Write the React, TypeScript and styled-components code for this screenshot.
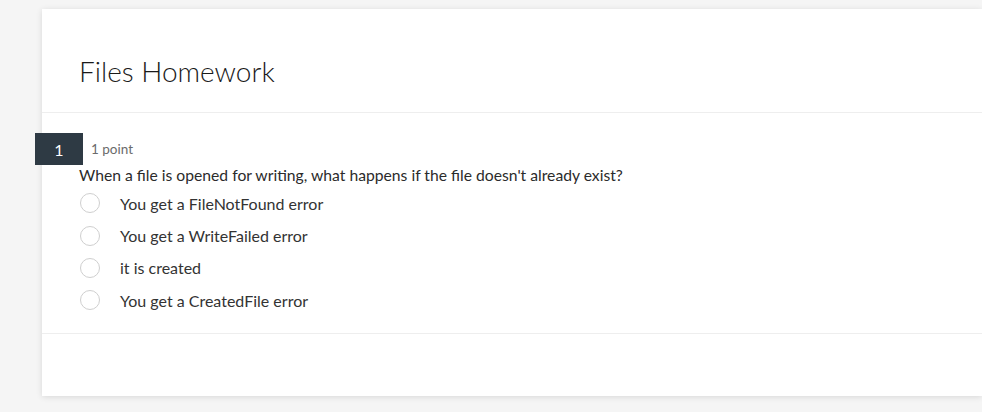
import React from "react";
import styled, { createGlobalStyle } from "styled-components";

const Global = createGlobalStyle`
  html, body { margin: 0; padding: 0; background: #f5f5f5; overflow: hidden; }
  body { font-family: Lato, "Open Sans", sans-serif; color: #333; }
  * { box-sizing: border-box; }
`;

const Page = styled.div`
  padding: 9px 0 0 42px;
  height: 412px;
`;

const Card = styled.div`
  background: #fff;
  box-shadow: 0 1px 6px rgba(0, 0, 0, 0.12);
`;

const Header = styled.div`
  height: 104px;
  border-bottom: 1px solid #eeeeee;
  padding: 44px 0 0 37px;
`;

const Title = styled.h1`
  margin: 0;
  font-family: Lato, sans-serif;
  font-weight: 300;
  font-size: 28px;
  line-height: 36px;
  color: #1a1a1a;
`;

const Question = styled.div`
  border-bottom: 1px solid #eeeeee;
  padding: 20px 0 16px 37px;
`;

const MetaRow = styled.div`
  display: flex;
  align-items: center;
  gap: 8px;
  margin-left: -44px;
`;

const Badge = styled.div`
  width: 48px;
  height: 32px;
  background: #2e3a44;
  color: #fff;
  font-size: 16px;
  display: flex;
  align-items: center;
  justify-content: center;
`;

const Points = styled.span`
  font-size: 13.5px;
  color: #6b6b6b;
`;

const Prompt = styled.div`
  font-size: 15.7px;
  line-height: 21px;
  color: #2b2b2b;
  margin-bottom: 1px;
`;

const Options = styled.div`
  display: flex;
  flex-direction: column;
`;

const Option = styled.label`
  display: flex;
  align-items: center;
  height: 32.4px;
  gap: 20px;
  padding-left: 1px;
  font-size: 16px;
  color: #333;
`;

const Radio = styled.span`
  width: 20px;
  height: 20px;
  border-radius: 50%;
  border: 1px solid #cfcfcf;
  background: #fff;
  flex: none;
`;

const Footer = styled.div`
  height: 62px;
`;

const options = [
  "You get a FileNotFound error",
  "You get a WriteFailed error",
  "it is created",
  "You get a CreatedFile error",
];

export default function App() {
  return (
    <>
      <Global />
      <Page>
        <Card>
          <Header>
            <Title>Files Homework</Title>
          </Header>
          <Question>
            <MetaRow>
              <Badge>1</Badge>
              <Points>1 point</Points>
            </MetaRow>
            <Prompt>
              When a file is opened for writing, what happens if the file doesn't already exist?
            </Prompt>
            <Options>
              {options.map((o) => (
                <Option key={o}>
                  <Radio />
                  {o}
                </Option>
              ))}
            </Options>
          </Question>
          <Footer />
        </Card>
      </Page>
    </>
  );
}
